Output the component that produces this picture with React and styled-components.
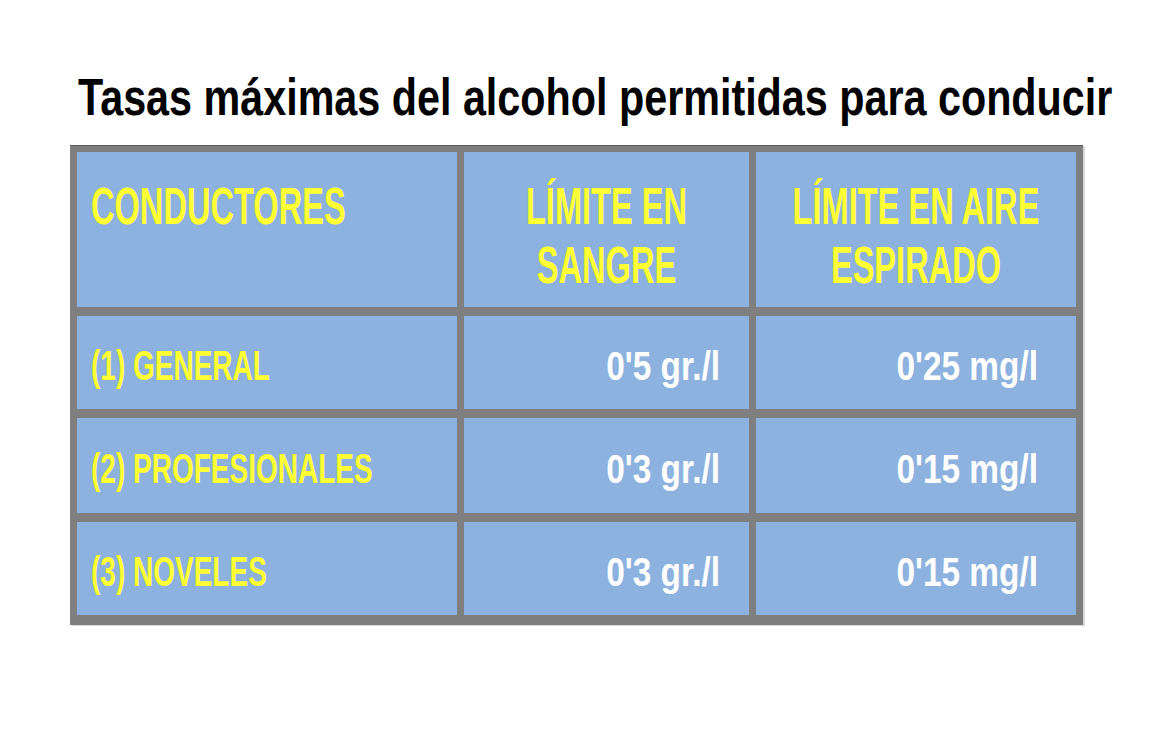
import React from "react";
import styled, { createGlobalStyle } from "styled-components";

const GlobalStyle = createGlobalStyle`
  body {
    margin: 0;
    background: #fff;
  }
`;

// no narrow face installed, so the tall condensed look comes from a vertical stretch
const Page = styled.div`
  width: 1170px;
  height: 733px;
  padding-top: 78px;
  box-sizing: border-box;
  overflow: hidden;
  font-family: "Liberation Sans", Arial, sans-serif;
`;

const Title = styled.h1`
  margin: 0 0 26px 78px;
  font-size: 41.3px;
  line-height: 41px;
  font-weight: 700;
  color: #000;
  white-space: nowrap;
  transform: scaleY(1.25);
  transform-origin: center;
`;

const Table = styled.div`
  display: grid;
  grid-template-columns: 380px 285px 320px;
  grid-template-rows: 155px 93px 95px 93px;
  column-gap: 7px;
  row-gap: 9px;
  width: 1013px;
  box-sizing: border-box;
  margin-left: 70px;
  padding: 6px 7px 10px 7px;
  background: #7f7f7f;
  border-top: 1px solid #5c5c5c;
  box-shadow: 2px 1px 0 #d9d9d9;
`;

const Cell = styled.div`
  display: flex;
  box-sizing: border-box;
  background: #8db2e0;
  align-items: ${(p) => (p.$head ? "flex-start" : "center")};
  justify-content: ${(p) =>
    p.$align === "right" ? "flex-end" : p.$align === "center" ? "center" : "flex-start"};
  text-align: ${(p) => p.$align || "left"};
  padding-top: ${(p) => (p.$head ? "26px" : "0")};
  padding-left: ${(p) => (p.$align ? "0" : "14px")};
  padding-right: ${(p) => p.$right || 0}px;
`;

const HeadText = styled.span`
  display: inline-block;
  font-size: 32.6px;
  line-height: 36.5px;
  font-weight: 700;
  color: #ffff33;
  white-space: nowrap;
  transform: scaleY(1.59);
  transform-origin: top center;
`;

const Label = styled.span`
  display: inline-block;
  margin-top: 6px;
  font-size: 28px;
  line-height: 28px;
  font-weight: 700;
  color: #ffff33;
  white-space: nowrap;
  transform: scaleY(1.55);
  transform-origin: center;
`;

const Value = styled.span`
  display: inline-block;
  margin-top: 9px;
  font-size: 33.4px;
  line-height: 34px;
  font-weight: 700;
  color: #fff;
  white-space: nowrap;
  transform: scaleY(1.19);
  transform-origin: center;
`;

const rows = [
  { label: "(1) GENERAL", blood: "0'5 gr./l", air: "0'25 mg/l" },
  { label: "(2) PROFESIONALES", blood: "0'3 gr./l", air: "0'15 mg/l" },
  { label: "(3) NOVELES", blood: "0'3 gr./l", air: "0'15 mg/l" },
];

export default function App() {
  return (
    <>
      <GlobalStyle />
      <Page>
        <Title>Tasas máximas del alcohol permitidas para conducir</Title>
        <Table>
          <Cell $head>
            <HeadText>CONDUCTORES</HeadText>
          </Cell>
          <Cell $head $align="center">
            <HeadText>
              LÍMITE EN
              <br />
              SANGRE
            </HeadText>
          </Cell>
          <Cell $head $align="center">
            <HeadText>
              LÍMITE EN AIRE
              <br />
              ESPIRADO
            </HeadText>
          </Cell>
          {rows.map((r) => (
            <React.Fragment key={r.label}>
              <Cell>
                <Label>{r.label}</Label>
              </Cell>
              <Cell $align="right" $right={29}>
                <Value>{r.blood}</Value>
              </Cell>
              <Cell $align="right" $right={38}>
                <Value>{r.air}</Value>
              </Cell>
            </React.Fragment>
          ))}
        </Table>
      </Page>
    </>
  );
}
